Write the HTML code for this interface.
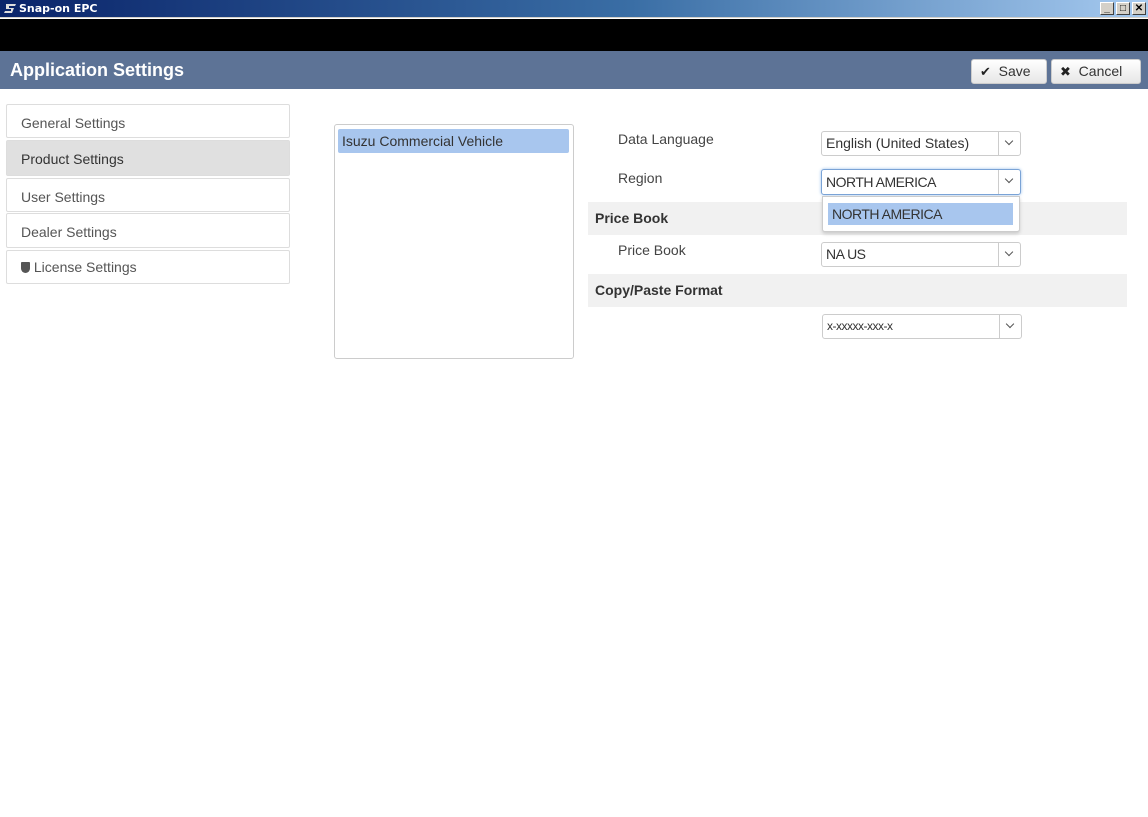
<!DOCTYPE html>
<html><head><style>
*{box-sizing:border-box;margin:0;padding:0}
body{width:1148px;height:817px;background:#fff;font-family:"Liberation Sans",sans-serif;position:relative;overflow:hidden;color:#333}
.a{position:absolute}
.tb{left:0;top:0;width:1148px;height:18px;background:linear-gradient(90deg,#0a246a 0%,#3a6ea5 55%,#a6caf0 100%);border-bottom:1px solid #d4d0c8}
.tb span{position:absolute;left:19px;top:2px;color:#fff;font-size:11px;font-weight:bold;font-family:"DejaVu Sans",sans-serif}
.wb{top:2px;width:14px;height:13px;background:#d4d0c8;border:1px solid;border-color:#fff #404040 #404040 #fff;font-size:10px;font-weight:bold;text-align:center;line-height:11px;color:#000}
.hd{left:0;top:51px;width:1148px;height:38px;background:#5d7396}
.hd b{position:absolute;left:10px;top:9px;color:#fff;font-size:18px}
.btn{top:59px;height:25px;background:linear-gradient(#fff,#e6e6e6);border:1px solid #ccc;border-radius:3px;font-size:14px;color:#333;line-height:23px}
.si{left:6px;width:284px;border:1px solid #ddd;border-radius:2px;font-size:14px;color:#555;padding-left:14px}
.sel{width:200px;border:1px solid #ccc;border-radius:3px;font-size:14px;color:#333;padding-left:4px;background:#fff}
.sel i{position:absolute;right:0;top:0;bottom:0;width:22px;border-left:1px solid #ccc}
.sel i:after{content:"";position:absolute;left:7px;top:6px;width:5px;height:5px;border-right:1.5px solid #555;border-bottom:1.5px solid #555;transform:rotate(45deg)}
.lb{left:618px;font-size:14px;color:#444}
.band{left:588px;width:539px;height:33px;background:#f1f1f1;font-size:14px;font-weight:bold;color:#333;padding:8px 7px}
</style></head><body>
<div class="a tb"><svg class="a" style="left:3px;top:3px" width="14" height="11"><path d="M3 1h10l-1 2H6l0 2h5l-2 5H1l1-2h6l0-2H3z" fill="#ddd"/></svg><span>Snap-on EPC</span></div>
<div class="a wb" style="left:1100px">_</div><div class="a wb" style="left:1116px">&#9633;</div><div class="a wb" style="left:1132px">✕</div>
<div class="a" style="left:0;top:19px;width:1148px;height:32px;background:#000"></div>
<div class="a hd"><b>Application Settings</b></div>
<div class="a btn" style="left:971px;width:76px;padding-left:8px"><span style="font-size:13px;color:#222">✔</span>&nbsp; Save</div>
<div class="a btn" style="left:1051px;width:90px;padding-left:8px"><span style="font-size:13px;color:#222">✖</span>&nbsp; Cancel</div>
<div class="a si" style="top:104px;height:34px;line-height:36px">General Settings</div>
<div class="a si" style="top:140px;height:36px;line-height:37px;background:#e0e0e0;color:#333">Product Settings</div>
<div class="a si" style="top:178px;height:34px;line-height:36px">User Settings</div>
<div class="a si" style="top:213px;height:35px;line-height:36px">Dealer Settings</div>
<div class="a si" style="top:250px;height:34px;line-height:33px"><span style="display:inline-block;width:9px;height:11px;background:#555;border-radius:1px 1px 5px 5px;vertical-align:-1px"></span> License Settings</div>
<div class="a" style="left:334px;top:124px;width:240px;height:235px;border:1px solid #ccc;border-radius:3px"></div>
<div class="a" style="left:338px;top:129px;width:231px;height:24px;background:#a8c6ee;border-radius:2px;font-size:14px;color:#333;padding:4px 4px">Isuzu Commercial Vehicle</div>
<div class="a lb" style="top:131px">Data Language</div>
<div class="a lb" style="top:170px">Region</div>
<div class="a band" style="top:202px">Price Book</div>
<div class="a lb" style="top:242px">Price Book</div>
<div class="a band" style="top:274px">Copy/Paste Format</div>
<div class="a sel" style="left:821px;top:131px;height:25px;line-height:23px">English (United States)<i></i></div>
<div class="a sel" style="left:821px;top:169px;height:26px;line-height:24px;border-color:#7aa3d6;box-shadow:0 0 3px #9cc0ea;letter-spacing:-.5px">NORTH AMERICA<i></i></div>
<div class="a" style="left:822px;top:196px;width:198px;height:36px;border:1px solid #ccc;border-radius:0 0 3px 3px;background:#fff;box-shadow:0 2px 3px #ccc"></div>
<div class="a" style="left:828px;top:203px;width:185px;height:22px;background:#a8c6ee;font-size:14px;line-height:22px;padding-left:4px;color:#333;letter-spacing:-.5px">NORTH AMERICA</div>
<div class="a sel" style="left:821px;top:242px;height:25px;line-height:23px;letter-spacing:-.5px">NA US<i></i></div>
<div class="a sel" style="left:822px;top:314px;height:25px;line-height:23px;font-size:12px;letter-spacing:-.5px">x-xxxxx-xxx-x<i></i></div>
</body></html>
